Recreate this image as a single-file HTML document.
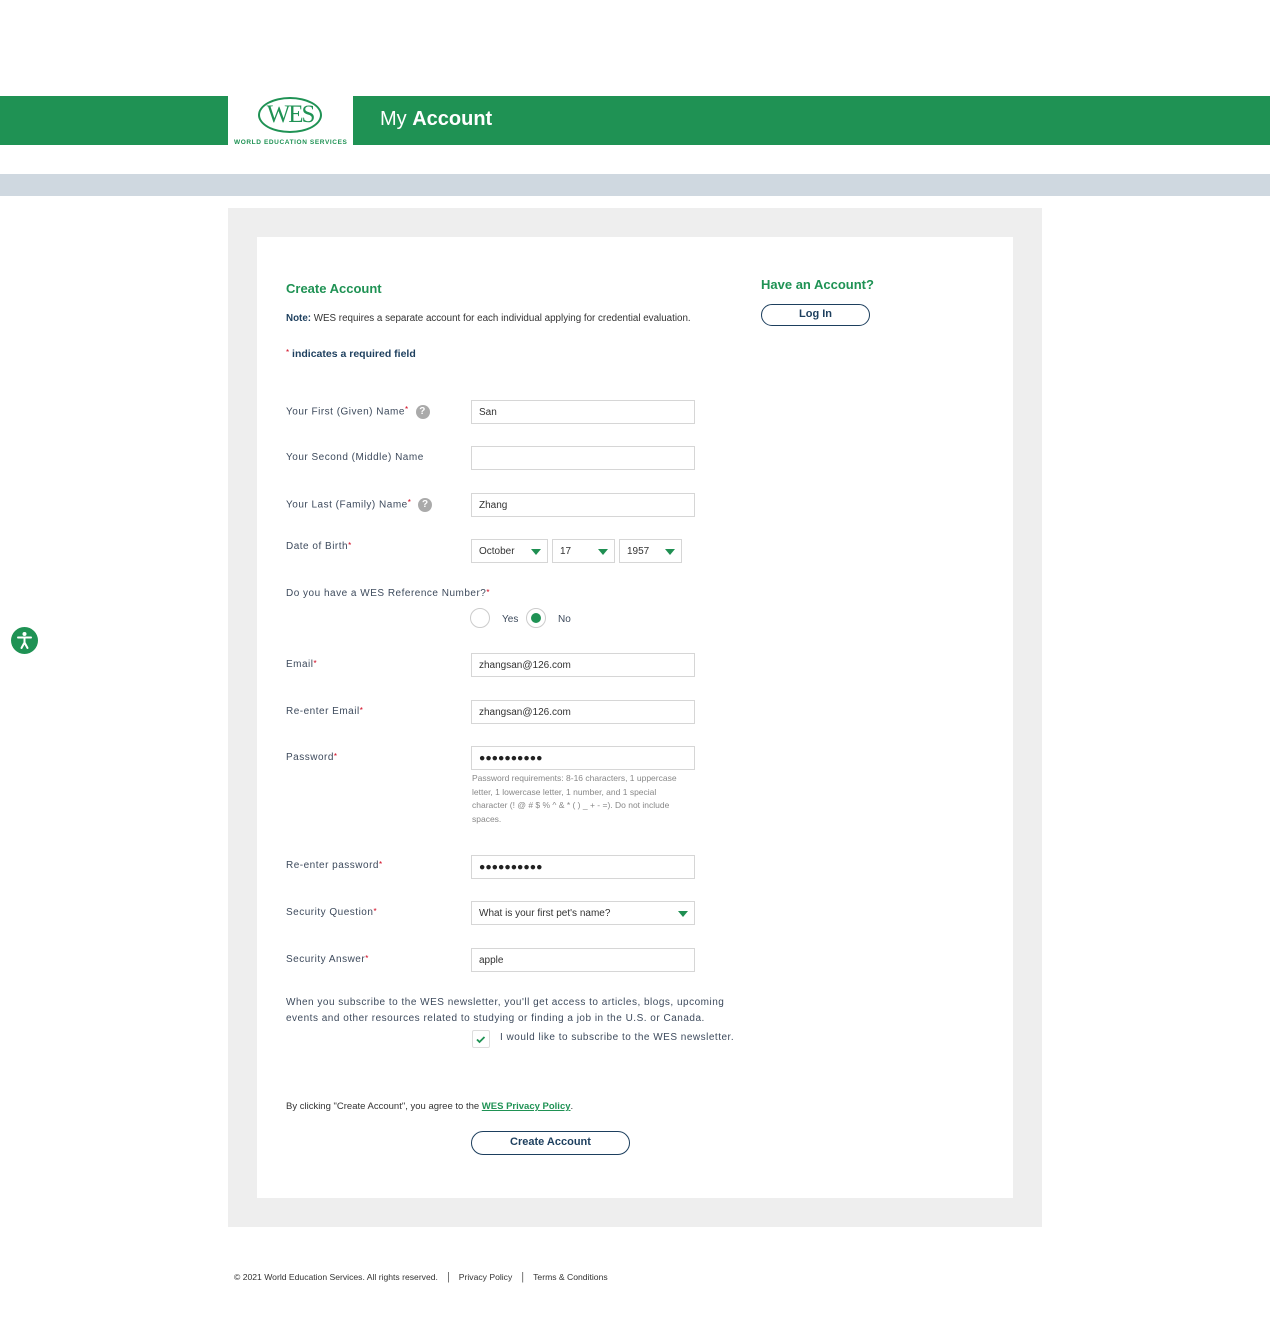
<!DOCTYPE html>
<html><head><meta charset="utf-8"><style>
*{box-sizing:border-box;margin:0;padding:0}
body{width:1270px;height:1332px;position:relative;background:#fff;font-family:"Liberation Sans",sans-serif;overflow:hidden}
.a{position:absolute}
.lbl{position:absolute;left:286px;font-size:10px;color:#3d4a5c;letter-spacing:.5px}
.req{color:#d0021b;font-size:8px;vertical-align:top}
.inp{position:absolute;left:471px;width:224px;height:24px;border:1px solid #d6d6d6;font-size:10px;color:#333;padding:6px 7px;background:#fff}
.sel{position:absolute;height:24px;border:1px solid #d6d6d6;font-size:10px;color:#333;padding:6px 7px}
.tri{position:absolute;right:6px;top:9px;width:0;height:0;border-left:5px solid transparent;border-right:5px solid transparent;border-top:6px solid #1f8f52}
.q{display:inline-block;width:14px;height:14px;border-radius:50%;background:#aaa;color:#fff;font-size:10px;font-weight:bold;text-align:center;line-height:14px;margin-left:7px;vertical-align:middle}
.btn{position:absolute;border:1.5px solid #1d3f5e;border-radius:12px;text-align:center;font-weight:bold;color:#1d3f5e;font-size:11px}
.dots{letter-spacing:0;font-size:10.5px;font-weight:bold;color:#222;padding-top:5px}
</style></head><body>
<div class="a" style="left:0;top:96px;width:1270px;height:49px;background:#1f9254"></div>
<div class="a" style="left:228px;top:96px;width:125px;height:52px;background:#fff"></div>
<div class="a" style="left:258px;top:97px;width:64px;height:36px;border:2.5px solid #1f9254;border-radius:50%;text-align:center;font-family:'Liberation Serif',serif;font-size:25px;color:#1f9254;line-height:31px;letter-spacing:-2px">WES</div>
<div class="a" style="left:234px;top:139px;font-size:6.5px;font-weight:bold;color:#1f9254;letter-spacing:.6px">WORLD EDUCATION SERVICES</div>
<div class="a" style="left:380px;top:108px;font-size:20px;color:#fff">My <b>Account</b></div>
<div class="a" style="left:0;top:174px;width:1270px;height:22px;background:#cfd8e0"></div>
<div class="a" style="left:228px;top:208px;width:814px;height:1019px;background:#eeeeee"></div>
<div class="a" style="left:257px;top:237px;width:756px;height:961px;background:#fff"></div>

<div class="a" style="left:286px;top:281px;font-size:13px;font-weight:bold;color:#1f9254">Create Account</div>
<div class="a" style="left:286px;top:313px;font-size:9.8px;color:#333"><b style="color:#1d3f5e">Note:</b> WES requires a separate account for each individual applying for credential evaluation.</div>
<div class="a" style="left:286px;top:348px;font-size:10.5px;font-weight:bold;color:#1d3f5e"><span class="req" style="font-weight:normal">*</span> indicates a required field</div>
<div class="a" style="left:761px;top:277px;font-size:13px;font-weight:bold;color:#1f9254">Have an Account?</div>
<div class="btn" style="left:761px;top:304px;width:109px;height:22px;line-height:19px">Log In</div>

<div class="lbl" style="top:405px">Your First (Given) Name<span class="req">*</span><span class="q">?</span></div>
<div class="inp" style="top:400px">San</div>
<div class="lbl" style="top:452px">Your Second (Middle) Name</div>
<div class="inp" style="top:446px"></div>
<div class="lbl" style="top:498px">Your Last (Family) Name<span class="req">*</span><span class="q">?</span></div>
<div class="inp" style="top:493px">Zhang</div>
<div class="lbl" style="top:541px">Date of Birth<span class="req">*</span></div>
<div class="sel" style="left:471px;top:539px;width:77px">October<span class="tri"></span></div>
<div class="sel" style="left:552px;top:539px;width:63px">17<span class="tri"></span></div>
<div class="sel" style="left:619px;top:539px;width:63px">1957<span class="tri"></span></div>
<div class="lbl" style="top:588px">Do you have a WES Reference Number?<span class="req">*</span></div>
<div class="a" style="left:470px;top:608px;width:20px;height:20px;border:1.5px solid #ccc;border-radius:50%"></div>
<div class="a" style="left:502px;top:614px;font-size:10px;color:#3d4a5c">Yes</div>
<div class="a" style="left:526px;top:608px;width:20px;height:20px;border:1.5px solid #ccc;border-radius:50%"><div style="margin:3.5px;width:10px;height:10px;border-radius:50%;background:#1f9254"></div></div>
<div class="a" style="left:558px;top:614px;font-size:10px;color:#3d4a5c">No</div>

<div class="lbl" style="top:659px">Email<span class="req">*</span></div>
<div class="inp" style="top:653px">zhangsan@126.com</div>
<div class="lbl" style="top:706px">Re-enter Email<span class="req">*</span></div>
<div class="inp" style="top:700px">zhangsan@126.com</div>
<div class="lbl" style="top:752px">Password<span class="req">*</span></div>
<div class="inp dots" style="top:746px">●●●●●●●●●●</div>
<div class="a" style="left:472px;top:772px;width:212px;font-size:8.5px;line-height:13.5px;color:#888">Password requirements: 8-16 characters, 1 uppercase letter, 1 lowercase letter, 1 number, and 1 special character (! @ # $ % ^ &amp; * ( ) _ + - =). Do not include spaces.</div>
<div class="lbl" style="top:860px">Re-enter password<span class="req">*</span></div>
<div class="inp dots" style="top:855px">●●●●●●●●●●</div>
<div class="lbl" style="top:907px">Security Question<span class="req">*</span></div>
<div class="sel" style="left:471px;top:901px;width:224px">What is your first pet's name?<span class="tri"></span></div>
<div class="lbl" style="top:954px">Security Answer<span class="req">*</span></div>
<div class="inp" style="top:948px">apple</div>

<div class="lbl" style="top:995px;line-height:16px;width:450px">When you subscribe to the WES newsletter, you'll get access to articles, blogs, upcoming events and other resources related to studying or finding a job in the U.S. or Canada.</div>
<div class="a" style="left:472px;top:1030px;width:18px;height:18px;border:1px solid #ddd;border-radius:2px"><svg width="16" height="16" viewBox="0 0 16 16"><path d="M4 8.5l2.5 2.5 5-5" stroke="#1f9254" stroke-width="1.8" fill="none"/></svg></div>
<div class="lbl" style="left:500px;top:1032px">I would like to subscribe to the WES newsletter.</div>
<div class="a" style="left:286px;top:1101px;font-size:9.5px;color:#333">By clicking "Create Account", you agree to the <b style="color:#1f9254;text-decoration:underline">WES Privacy Policy</b>.</div>
<div class="btn" style="left:471px;top:1131px;width:159px;height:24px;line-height:21px">Create Account</div>

<div class="a" style="left:11px;top:627px;width:27px;height:27px;border-radius:50%;background:#1f9254"><svg width="27" height="27" viewBox="0 0 27 27"><circle cx="13.5" cy="7" r="2" fill="#fff"/><path d="M7 10.5h13M13.5 10.5v5M13.5 15.5l-3 5.5M13.5 15.5l3 5.5" stroke="#fff" stroke-width="2" fill="none" stroke-linecap="round"/></svg></div>

<div class="a" style="left:234px;top:1271px;font-size:8.6px;color:#333;white-space:nowrap">© 2021 World Education Services. All rights reserved.<span style="margin:0 9px;color:#666;font-size:11px">|</span>Privacy Policy<span style="margin:0 9px;color:#666;font-size:11px">|</span>Terms &amp; Conditions</div>
</body></html>
